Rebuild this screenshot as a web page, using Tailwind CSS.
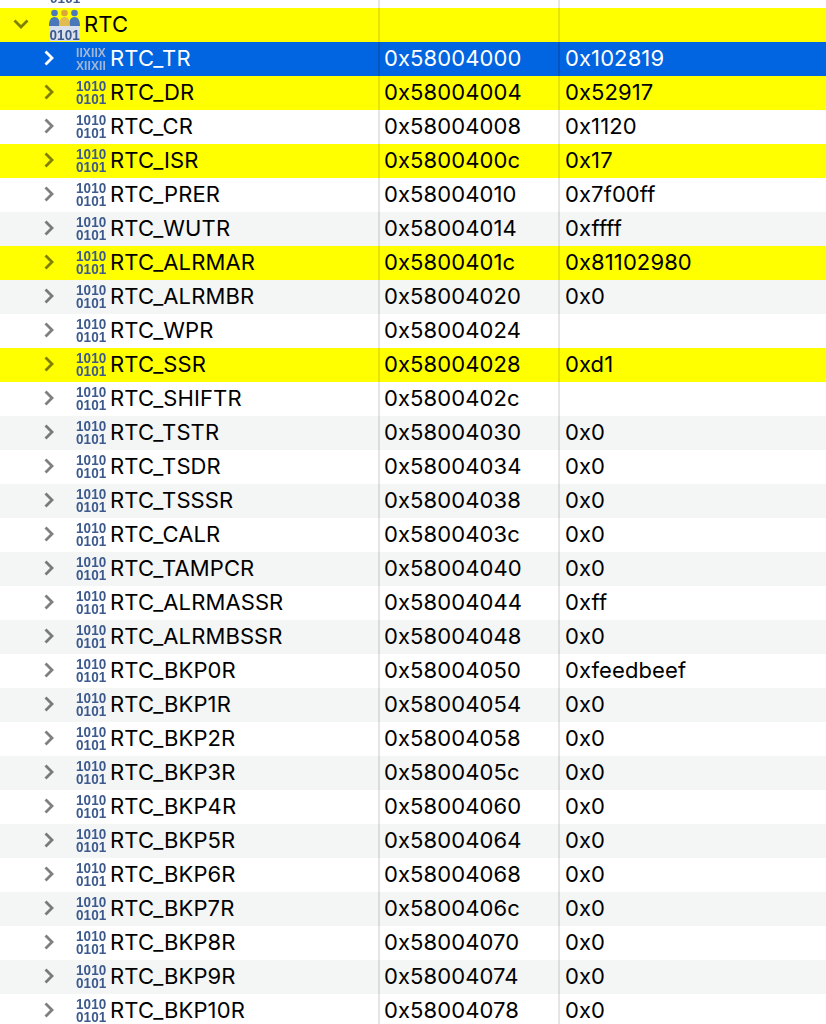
<!DOCTYPE html>
<html lang="en">
<head>
    <meta charset="UTF-8">
    <title>RTC registers</title>
    <script src="https://cdn.jsdelivr.net/npm/@tailwindcss/browser@4"></script>
</head>
<body class="bg-white overflow-hidden font-['Inter',sans-serif] text-[22px] tracking-[0.1px] text-black">
    <div id="table" class="w-[826px] h-[1024px] overflow-hidden flex flex-col">
        <!-- sliver of the row scrolled off above -->
        <div class="h-[8px] shrink-0 flex overflow-hidden bg-white">
            <div class="w-[380px] shrink-0 border-r-2 border-black/10">
                <svg class="ml-[50px] w-[30px] h-[8px] blur-[0.4px]" viewBox="0 0 30 8">
                    <text x="0" y="3" font-family="Liberation Sans" font-size="13.500" font-weight="700" fill="#3c5a8e">0101</text>
                </svg>
            </div>
            <div class="w-[180px] shrink-0 border-r-2 border-black/10"></div>
        </div>
        <!-- group row -->
        <div class="h-[34px] shrink-0 flex items-center bg-[#ffff00]">
            <div class="w-[380px] shrink-0 h-full flex items-center pb-[2px] border-r-2 border-black/10">
                <svg class="ml-[13px] w-[16px] h-[10px] text-black/50" viewBox="0 0 16 10" fill="none" stroke="currentColor" stroke-width="2.8"><path d="M1.500 1.500l6.500 6.500 6.500-6.500"/></svg>
                <svg class="ml-[20px] -mb-[2px] w-[31px] h-[34px] shrink-0 blur-[0.4px]" viewBox="0 0 31 34">
                    <rect x="0" y="17" width="31" height="16" fill="#dbe1ec"/>
                    <circle cx="5.500" cy="5" r="3.300" fill="#4a78b8"/><circle cx="15.500" cy="5" r="3.300" fill="#d8a838"/><circle cx="25.500" cy="5" r="3.300" fill="#4a78b8"/>
                    <path d="M0 18c0-6 2-9 5.500-9s5.500 3 5.500 9zM20 18c0-6 2-9 5.500-9s5.500 3 5.500 9z" fill="#4a78b8"/>
                    <path d="M10 18c0-6 2-9 5.500-9s5.500 3 5.500 9z" fill="#e2bc50"/>
                    <text x="0.500" y="32" font-size="13.500" font-weight="700" fill="#3c5a8e" font-family="Liberation Sans" transform="translate(0 -4.500) scale(1 1.140)">0101</text>
                </svg>
                <span class="ml-[4px]">RTC</span>
            </div>
            <div class="w-[180px] shrink-0 h-full border-r-2 border-black/10"></div>
        </div>
        <div id="rows"></div>
    </div>

    <script>
        const registers = [
            ['RTC_TR', '0x58004000', '0x102819', 'selected'],
            ['RTC_DR', '0x58004004', '0x52917', 'changed'],
            ['RTC_CR', '0x58004008', '0x1120'],
            ['RTC_ISR', '0x5800400c', '0x17', 'changed'],
            ['RTC_PRER', '0x58004010', '0x7f00ff'],
            ['RTC_WUTR', '0x58004014', '0xffff'],
            ['RTC_ALRMAR', '0x5800401c', '0x81102980', 'changed'],
            ['RTC_ALRMBR', '0x58004020', '0x0'],
            ['RTC_WPR', '0x58004024', ''],
            ['RTC_SSR', '0x58004028', '0xd1', 'changed'],
            ['RTC_SHIFTR', '0x5800402c', ''],
            ['RTC_TSTR', '0x58004030', '0x0'],
            ['RTC_TSDR', '0x58004034', '0x0'],
            ['RTC_TSSSR', '0x58004038', '0x0'],
            ['RTC_CALR', '0x5800403c', '0x0'],
            ['RTC_TAMPCR', '0x58004040', '0x0'],
            ['RTC_ALRMASSR', '0x58004044', '0xff'],
            ['RTC_ALRMBSSR', '0x58004048', '0x0'],
            ['RTC_BKP0R', '0x58004050', '0xfeedbeef'],
            ['RTC_BKP1R', '0x58004054', '0x0'],
            ['RTC_BKP2R', '0x58004058', '0x0'],
            ['RTC_BKP3R', '0x5800405c', '0x0'],
            ['RTC_BKP4R', '0x58004060', '0x0'],
            ['RTC_BKP5R', '0x58004064', '0x0'],
            ['RTC_BKP6R', '0x58004068', '0x0'],
            ['RTC_BKP7R', '0x5800406c', '0x0'],
            ['RTC_BKP8R', '0x58004070', '0x0'],
            ['RTC_BKP9R', '0x58004074', '0x0'],
            ['RTC_BKP10R', '0x58004078', '0x0']
        ];

        function rowClass(state, index) {
            if (state === 'selected') return 'bg-[#0164e1] text-white';
            if (state === 'changed') return 'bg-[#ffff00] text-black';
            return index % 2 === 1 ? 'bg-[#f4f5f5] text-black' : 'bg-white text-black';
        }

        function bitsIcon(top, bottom, color, size) {
            return `<svg class="ml-[22px] w-[30px] h-[34px] shrink-0 blur-[0.4px] -mb-[2px]" viewBox="0 0 30 34">
                <g font-family="Liberation Sans" font-size="${size}" font-weight="700" fill="${color}">
                    <text x="0" y="13.200" transform="scale(1 1.140)">${top}</text>
                    <text x="0" y="24.600" transform="scale(1 1.140)">${bottom}</text>
                </g></svg>`;
        }

        document.getElementById('rows').innerHTML = registers.map(([name, address, value, state], index) => {
            const selected = state === 'selected';
            const chevron = selected ? 'text-white' : 'text-black/50';
            const icon = selected ? bitsIcon('IIXIIX', 'XIIXII', '#a3b6d4', 12) : bitsIcon('1010', '0101', '#3c5a8e', 13.5);
            return `<div class="h-[34px] flex items-center pb-[2px] ${rowClass(state, index)}">
                <div class="w-[380px] shrink-0 h-[34px] -mb-[2px] pb-[2px] flex items-center border-r-2 ${selected ? 'border-black/15' : 'border-black/10'}">
                    <svg class="ml-[44px] w-[10px] h-[16px] shrink-0 ${chevron}" viewBox="0 0 10 16" fill="none" stroke="currentColor" stroke-width="2.8"><path d="M1.500 1.500l6.500 6.500-6.500 6.500"/></svg>
                    ${icon}
                    <span class="ml-[4px]">${name}</span>
                </div>
                <div class="w-[180px] shrink-0 h-[34px] -mb-[2px] pb-[2px] flex items-center pl-[4px] border-r-2 ${selected ? 'border-black/15' : 'border-black/10'}">${address}</div>
                <div class="pl-[5px]">${value}</div>
            </div>`;
        }).join('');
    </script>
</body>
</html>
